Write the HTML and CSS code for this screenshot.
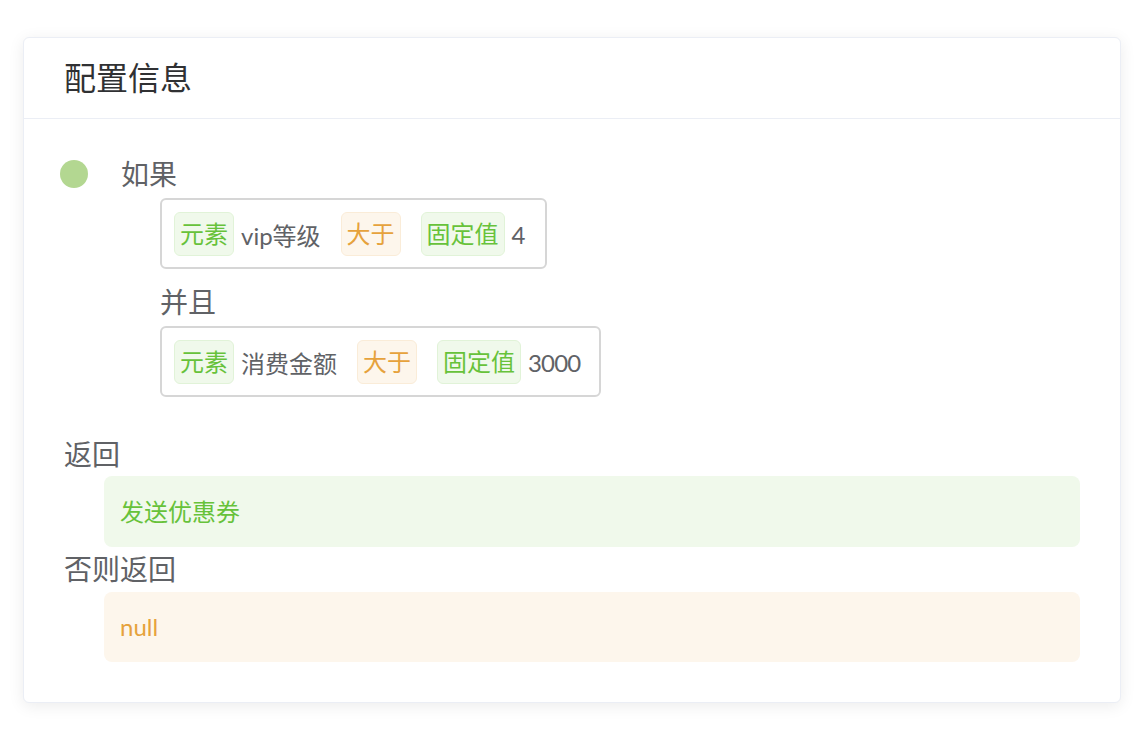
FILE: index.html
```html
<!DOCTYPE html>
<html lang="zh-CN">
<head>
<meta charset="utf-8">
<title>配置信息</title>
<link rel="stylesheet" href="styles.css">
</head>
<body>
<div class="page">
  <div class="card">
    <div class="card-header">配置信息</div>
    <div class="card-body">
      <div class="if-row">
        <span class="dot"></span>
        <span class="label">如果</span>
      </div>
      <div class="conditions">
        <div class="rule">
          <div class="group"><span class="tag tag-success">元素</span><span class="val">vip等级</span></div>
          <div class="group"><span class="tag tag-warning">大于</span></div>
          <div class="group"><span class="tag tag-success">固定值</span><span class="val">4</span></div>
        </div>
        <div class="label and-label">并且</div>
        <div class="rule">
          <div class="group"><span class="tag tag-success">元素</span><span class="val">消费金额</span></div>
          <div class="group"><span class="tag tag-warning">大于</span></div>
          <div class="group"><span class="tag tag-success">固定值</span><span class="val num">3000</span></div>
        </div>
      </div>
      <div class="label ret-label">返回</div>
      <div class="alert alert-success">发送优惠券</div>
      <div class="label else-label">否则返回</div>
      <div class="alert alert-warning">null</div>
    </div>
  </div>
</div>
</body>
</html>
```
FILE: styles.css
```css
html, body {
  margin: 0;
  padding: 0;
  background: #ffffff;
  font-family: Lato, "Noto Sans CJK SC", "Noto Sans", sans-serif;
}

.page {
  padding: 37px 23px 40px;
}

.card {
  background: #fff;
  border: 1px solid #ebeef5;
  border-radius: 6px;
  box-shadow: 0 3px 16px 0 rgba(0, 0, 0, 0.08);
  overflow: hidden;
}

.card-header {
  height: 80px;
  line-height: 80px;
  padding: 0 40px;
  font-size: 32px;
  color: #303133;
  border-bottom: 1px solid #ebeef5;
}

.card-body {
  padding: 41px 40px 40px;
}

.if-row {
  display: flex;
  align-items: center;
  height: 28px;
  margin-left: -4px;
}

.dot {
  width: 28px;
  height: 28px;
  border-radius: 50%;
  background: #b3d791;
  flex: none;
}

.label {
  font-size: 28px;
  line-height: 40px;
  color: #606266;
}

.if-row .label {
  line-height: 28px;
  margin-left: 33px;
}

.conditions {
  margin-left: 96px;
  margin-top: 10px;
}

.rule {
  display: inline-flex;
  align-items: center;
  gap: 20px;
  border: 2px solid #d6d6d6;
  border-radius: 6px;
  padding: 12px 19px 11px 12px;
}

.group {
  display: flex;
  align-items: center;
  gap: 7px;
}

.tag {
  display: inline-block;
  height: 42px;
  line-height: 42px;
  padding: 0 5px;
  font-size: 24px;
  border: 1px solid;
  border-radius: 6px;
}

.tag-success {
  background: #f0f9eb;
  border-color: #e1f3d8;
  color: #67c23a;
}

.tag-warning {
  background: #fdf6ec;
  border-color: #faecd8;
  color: #e6a23c;
}

.val {
  font-size: 24px;
  color: #606266;
}

.num {
  letter-spacing: -0.8px;
}

.and-label {
  margin: 13px 0 4px;
}

.ret-label {
  margin: 37px 0 2px;
}

.else-label {
  margin: 2px 0 3px;
}

.alert {
  margin-left: 40px;
  height: 71px;
  line-height: 71px;
  padding: 0 16px;
  border-radius: 8px;
  font-size: 24px;
}

.alert-success {
  background: #f0f9eb;
  color: #67c23a;
}

.alert-warning {
  background: #fdf6ec;
  color: #e6a23c;
  height: 70px;
  line-height: 70px;
}
```
